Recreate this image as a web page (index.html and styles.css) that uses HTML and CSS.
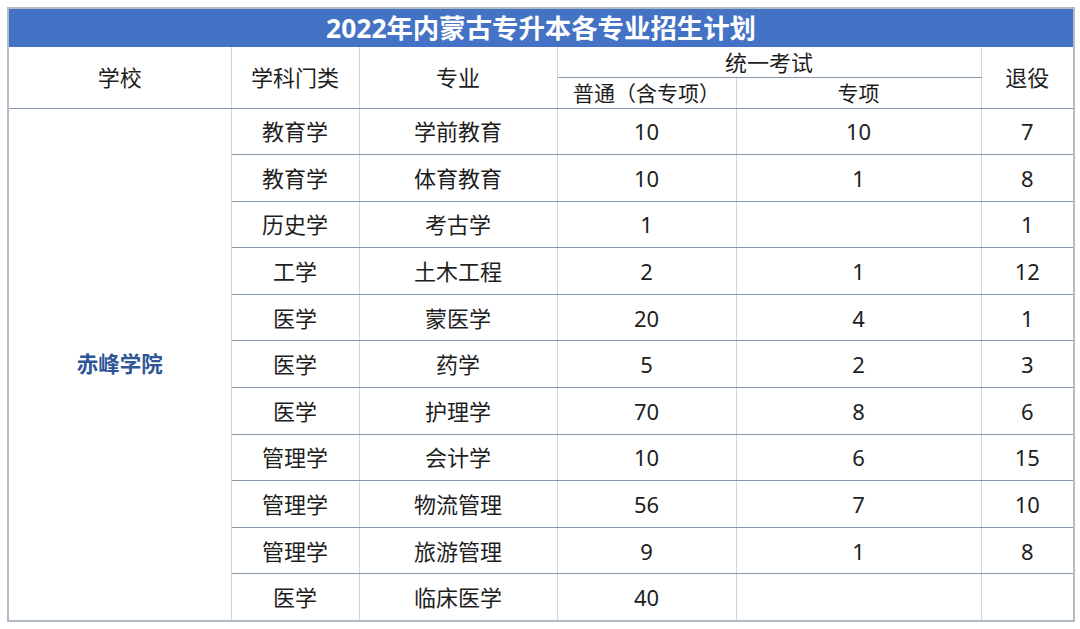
FILE: index.html
```html
<!DOCTYPE html>
<html lang="zh-CN">
<head>
<meta charset="utf-8">
<title>2022年内蒙古专升本各专业招生计划</title>
<link rel="stylesheet" href="styles.css">
</head>
<body>
<table class="plan">
  <colgroup>
    <col class="c-school"><col class="c-cat"><col class="c-major"><col class="c-normal"><col class="c-special"><col class="c-vet">
  </colgroup>
  <thead>
    <tr class="title-row"><th colspan="6" class="title">2022年内蒙古专升本各专业招生计划</th></tr>
    <tr class="head-a">
      <th rowspan="2" class="hd">学校</th>
      <th rowspan="2" class="hd">学科门类</th>
      <th rowspan="2" class="hd">专业</th>
      <th colspan="2" class="hd group">统一考试</th>
      <th rowspan="2" class="hd">退役</th>
    </tr>
    <tr class="head-b">
      <th class="hd sub">普通（含专项）</th>
      <th class="hd sub">专项</th>
    </tr>
  </thead>
  <tbody>
    <tr><td rowspan="11" class="school">赤峰学院</td><td>教育学</td><td>学前教育</td><td>10</td><td>10</td><td>7</td></tr>
    <tr><td>教育学</td><td>体育教育</td><td>10</td><td>1</td><td>8</td></tr>
    <tr><td>历史学</td><td>考古学</td><td>1</td><td></td><td>1</td></tr>
    <tr><td>工学</td><td>土木工程</td><td>2</td><td>1</td><td>12</td></tr>
    <tr><td>医学</td><td>蒙医学</td><td>20</td><td>4</td><td>1</td></tr>
    <tr><td>医学</td><td>药学</td><td>5</td><td>2</td><td>3</td></tr>
    <tr><td>医学</td><td>护理学</td><td>70</td><td>8</td><td>6</td></tr>
    <tr><td>管理学</td><td>会计学</td><td>10</td><td>6</td><td>15</td></tr>
    <tr><td>管理学</td><td>物流管理</td><td>56</td><td>7</td><td>10</td></tr>
    <tr><td>管理学</td><td>旅游管理</td><td>9</td><td>1</td><td>8</td></tr>
    <tr><td>医学</td><td>临床医学</td><td>40</td><td></td><td></td></tr>
  </tbody>
</table>
</body>
</html>
```

FILE: styles.css
```css
html, body {
  margin: 0;
  padding: 0;
  background: #ffffff;
}
body {
  padding: 7px 0 0 7px;
  font-family: "Noto Sans", "Noto Sans CJK SC", sans-serif;
  color: #1e1e1e;
}
.plan {
  border-collapse: collapse;
  width: 1066px;
  table-layout: fixed;
  border: 2px solid #b3bcc6;
}
.c-school { width: 223px; }
.c-cat { width: 128px; }
.c-major { width: 198px; }
.c-normal { width: 179px; }
.c-special { width: 245px; }
.c-vet { width: 93px; }

.plan th, .plan td {
  padding: 0;
  text-align: center;
  vertical-align: middle;
  font-size: 22px;
  font-weight: 400;
  line-height: 1;
  border-left: 1px solid #cfd5dc;
  border-right: 1px solid #cfd5dc;
  border-top: 1px solid #8798ad;
  border-bottom: 1px solid #8798ad;
}
.title-row { height: 38px; }
.plan th.title {
  background: #4472c4;
  color: #ffffff;
  font-size: 26.4px;
  font-weight: 700;
  border-color: #4472c4;
  padding-top: 1px;
}
.head-a { height: 31px; }
.head-b { height: 31px; }
.plan th.group {
  padding-top: 0;
}
.plan th.sub {
  font-size: 21px;
  padding-top: 2px;
}
.plan tbody tr { height: 46.6px; }
.plan td.school {
  color: #2f5597;
  font-weight: 700;
  font-size: 21.5px;
  border-bottom: 2px solid #b3bcc6;
}
.plan tbody tr:last-child td {
  border-bottom: 2px solid #b3bcc6;
}
```
